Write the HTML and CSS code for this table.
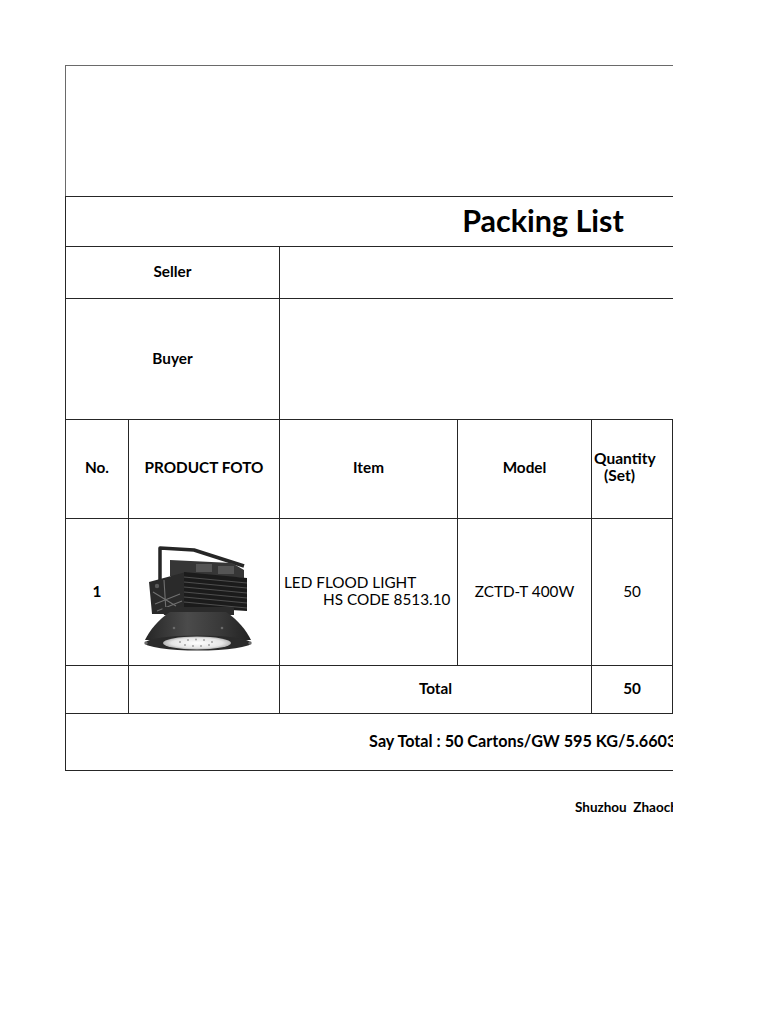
FILE: index.html
```html
<!DOCTYPE html>
<html>
<head>
<meta charset="utf-8">
<link rel="stylesheet" href="styles.css">
</head>
<body>
<div class="sheet">
  <table class="pl">
    <colgroup>
      <col class="c-no"><col class="c-foto"><col class="c-item"><col class="c-model"><col class="c-qty"><col class="c-rest">
    </colgroup>
    <tr class="r-head"><td colspan="6"></td></tr>
    <tr class="r-title"><td colspan="6" class="title"><div class="up3">Packing List</div></td></tr>
    <tr class="r-seller"><td colspan="2" class="lbl"><div class="up3">Seller</div></td><td colspan="4"></td></tr>
    <tr class="r-buyer"><td colspan="2" class="lbl"><div class="up2">Buyer</div></td><td colspan="4"></td></tr>
    <tr class="r-cols">
      <td class="lbl"><div class="up4">No.</div></td>
      <td class="lbl"><div class="up4">PRODUCT FOTO</div></td>
      <td class="lbl"><div class="up4">Item</div></td>
      <td class="lbl"><div class="up4">Model</div></td>
      <td class="lbl qty"><div class="up4"><span class="l1">Quantity</span><span class="l2">(Set)</span></div></td>
      <td></td>
    </tr>
    <tr class="r-prod">
      <td class="lbl"><div class="up2">1</div></td>
      <td class="foto">
        <svg class="lamp" width="120" height="120" viewBox="0 0 120 120" xmlns="http://www.w3.org/2000/svg">
          <defs>
            <linearGradient id="bell" x1="0" y1="0" x2="1" y2="0">
              <stop offset="0" stop-color="#262626"/>
              <stop offset="0.4" stop-color="#4b4b4b"/>
              <stop offset="0.7" stop-color="#3a3a3a"/>
              <stop offset="1" stop-color="#222222"/>
            </linearGradient>
            <radialGradient id="glow" cx="0.5" cy="0.5" r="0.5">
              <stop offset="0" stop-color="#ffffff"/>
              <stop offset="0.75" stop-color="#e6e6e6"/>
              <stop offset="1" stop-color="#b5b5b5"/>
            </radialGradient>
          </defs>
          <path d="M24 44 V12 L58 14 L108 30" fill="none" stroke="#262626" stroke-width="3.5" stroke-linejoin="round"/>
          <polygon points="34,24 96,27 108,34 108,42 34,40" fill="#363636"/>
          <rect x="60" y="28" width="16" height="8" fill="#555"/>
          <rect x="82" y="30" width="16" height="8" fill="#555"/>
          <polygon points="13,46 50,36 50,78 16,78" fill="#2a2a2a"/>
          <path d="M17 56 L40 70 M19 68 L44 58 M21 75 L46 65 M28 44 L30 76" stroke="#707070" stroke-width="1.1" fill="none"/>
          <circle cx="21" cy="50" r="2.2" fill="#5a5a5a"/>
          <polygon points="48,36 111,42 111,75 48,71" fill="#1b1b1b"/>
          <g stroke="#4e4e4e" stroke-width="1.1">
            <line x1="48" y1="41" x2="111" y2="47"/>
            <line x1="48" y1="46" x2="111" y2="52"/>
            <line x1="48" y1="51" x2="111" y2="57"/>
            <line x1="48" y1="56" x2="111" y2="62"/>
            <line x1="48" y1="61" x2="111" y2="67"/>
            <line x1="48" y1="66" x2="111" y2="72"/>
          </g>
          <polygon points="26,71 98,71 98,79 28,79" fill="#2b2b2b"/>
          <path d="M34 76 L90 76 C102 84 110 94 115 104 L9 104 C14 94 22 84 34 76 Z" fill="url(#bell)"/>
          <ellipse cx="62" cy="107" rx="53" ry="7.5" fill="#2b2b2b"/>
          <circle cx="10" cy="107" r="1.7" fill="#6a6a6a"/>
          <circle cx="114" cy="107" r="1.7" fill="#6a6a6a"/>
          <circle cx="38" cy="92" r="1.3" fill="#6a6a6a"/>
          <circle cx="86" cy="92" r="1.3" fill="#6a6a6a"/>
          <ellipse cx="61" cy="107" rx="34" ry="6.5" fill="url(#glow)"/>
          <g fill="#a0a0a0">
            <circle cx="44" cy="106" r="1"/><circle cx="52" cy="104" r="1"/><circle cx="60" cy="103.5" r="1"/>
            <circle cx="68" cy="104" r="1"/><circle cx="76" cy="106" r="1"/><circle cx="49" cy="109" r="1"/>
            <circle cx="57" cy="110" r="1"/><circle cx="65" cy="110" r="1"/><circle cx="73" cy="109" r="1"/>
          </g>
        </svg>
      </td>
      <td class="item"><div class="up2"><span class="l1">LED FLOOD LIGHT</span><span class="l2">HS CODE 8513.10</span></div></td>
      <td class="reg"><div class="up2">ZCTD-T 400W</div></td>
      <td class="reg"><div class="up2">50</div></td>
      <td></td>
    </tr>
    <tr class="r-total">
      <td></td>
      <td></td>
      <td colspan="2" class="lbl"><div class="up4">Total</div></td>
      <td class="lbl"><div class="up4">50</div></td>
      <td></td>
    </tr>
    <tr class="r-say"><td colspan="6" class="say"><div class="up4">Say Total : 50 Cartons/GW 595 KG/5.6603 CBM</div></td></tr>
  </table>
  <div class="sign">Shuzhou&nbsp; Zhaochi Lighting Co., Ltd.</div>
</div>
</body>
</html>
```

FILE: styles.css
```css
html, body {
  margin: 0;
  padding: 0;
  background: #ffffff;
}

body {
  font-family: Lato, "Open Sans", "DejaVu Sans", sans-serif;
  color: #000;
}

.sheet {
  margin: 65px 0 0 65px;
  width: 608px;
  overflow: hidden;
}

.pl {
  border-collapse: collapse;
  table-layout: fixed;
  width: 955px;
}

.pl td {
  border: 1px solid #262626;
  padding: 0;
  text-align: center;
  vertical-align: middle;
  white-space: nowrap;
  overflow: hidden;
}

.c-no { width: 63px; }
.c-foto { width: 151px; }
.c-item { width: 178px; }
.c-model { width: 134px; }
.c-qty { width: 81px; }
.c-rest { width: 348px; }

.r-head td { height: 130px; border-top-color: #6a6a6a; border-left-color: #6a6a6a; }
.r-title td { height: 49px; }
.r-seller td { height: 51px; border-top-color: #5a5a5a; }
.r-buyer td { height: 120px; }
.r-cols td { height: 98px; }
.r-prod td { height: 146px; }
.r-total td { height: 47px; }
.r-say td { height: 56px; }

.up2 { margin-bottom: 2px; }
.up3 { margin-bottom: 3px; }
.up4 { margin-bottom: 4px; }

.title {
  font-size: 30.5px;
  font-weight: 700;
}

.lbl {
  font-size: 15.3px;
  font-weight: 700;
}

.qty {
  text-align: left !important;
  line-height: 17px;
  font-size: 15.5px;
}

.qty .up4 { padding-left: 2px; }

.qty span, .item span {
  display: block;
}

.qty .l2 { padding-left: 10px; }

.foto {
  vertical-align: top !important;
  text-align: left !important;
}

.lamp {
  display: block;
  margin: 17px 0 0 7px;
}

.item {
  text-align: left !important;
  font-size: 15.3px;
  line-height: 17px;
}

.item .up2 { padding-left: 4px; }

.item .l2 { padding-left: 39px; }

.reg {
  font-size: 15.3px;
}

.say {
  font-size: 16.2px;
  font-weight: 700;
}

.sign {
  padding: 28px 0 0 510px;
  font-size: 13.5px;
  font-weight: 700;
  white-space: nowrap;
}
```
